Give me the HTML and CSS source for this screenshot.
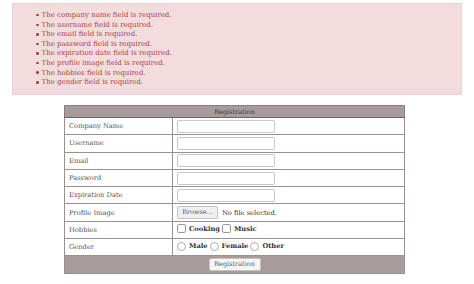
FILE: index.html
```html
<!DOCTYPE html>
<html>
<head>
<meta charset="utf-8">
<link rel="stylesheet" href="styles.css">
</head>
<body>
<div class="alert">
  <ul>
    <li>The company name field is required.</li>
    <li>The username field is required.</li>
    <li>The email field is required.</li>
    <li>The password field is required.</li>
    <li>The expiration date field is required.</li>
    <li>The profile image field is required.</li>
    <li>The hobbies field is required.</li>
    <li>The gender field is required.</li>
  </ul>
</div>
<table class="form">
  <tr class="head"><th colspan="2">Registration</th></tr>
  <tr><td class="lbl">Company Name</td><td><input class="txt" type="text"></td></tr>
  <tr><td class="lbl">Username</td><td><input class="txt" type="text"></td></tr>
  <tr><td class="lbl">Email</td><td><input class="txt" type="text"></td></tr>
  <tr><td class="lbl">Password</td><td><input class="txt" type="text"></td></tr>
  <tr><td class="lbl">Expiration Date</td><td><input class="txt" type="text"></td></tr>
  <tr><td class="lbl">Profile Image</td><td><span class="browse">Browse...</span><span class="nofile">No file selected.</span></td></tr>
  <tr><td class="lbl">Hobbies</td><td><span class="opt"><span class="box"></span><b>Cooking</b></span><span class="opt"><span class="box"></span><b>Music</b></span></td></tr>
  <tr><td class="lbl">Gender</td><td><span class="opt"><span class="radio"></span><b>Male</b></span><span class="opt"><span class="radio"></span><b>Female</b></span><span class="opt"><span class="radio"></span><b>Other</b></span></td></tr>
  <tr class="foot"><td colspan="2"><span class="submit">Registration</span></td></tr>
</table>
</body>
</html>
```
FILE: styles.css
```css
html, body {
  margin: 0;
  padding: 0;
  background: #ffffff;
}
body {
  font-family: "DejaVu Serif", serif;
  font-size: 6.7px;
  color: #444;
}
.alert {
  margin: 3px 12px 0 12px;
  width: 450px;
  height: 92px;
  box-sizing: border-box;
  background: #f2dcde;
  border: 1px solid #ecd0d3;
  padding-top: 7px;
  color: #a94442;
}
.alert ul {
  margin: 0;
  padding-left: 23px;
  list-style: none;
}
.alert li {
  font-size: 7px;
  line-height: 9.6px;
}
.alert li::before {
  content: "";
  display: inline-block;
  width: 2.5px;
  height: 2.5px;
  border-radius: 50%;
  background: #a94442;
  margin-right: 3px;
  vertical-align: middle;
}
table.form {
  margin: 10px 0 0 64px;
  width: 341px;
  border-collapse: collapse;
  border: 1px solid #8a8080;
}
.head th {
  background: #a89b9b;
  font-weight: normal;
  height: 11px;
  padding: 0;
  font-size: 6.5px;
  color: #3c3434;
  border-bottom: 1px solid #6e6464;
}
td {
  border: 1px solid #9a9090;
  height: 16.3px;
  padding: 0 4px;
  vertical-align: middle;
}
td.lbl {
  width: 99px;
  color: #555;
}
.txt {
  display: block;
  width: 98px;
  height: 13px;
  box-sizing: border-box;
  border: 1px solid #c8c8c8;
  border-radius: 2px;
  background: #fff;
  margin: 0;
  padding: 0;
}
.browse {
  display: inline-block;
  width: 41px;
  height: 13px;
  box-sizing: border-box;
  border: 1px solid #c4c4c4;
  border-radius: 2px;
  background: #f0f0f0;
  font-size: 6.5px;
  line-height: 11px;
  text-align: center;
  color: #555;
  vertical-align: middle;
}
.nofile {
  margin-left: 4px;
  vertical-align: middle;
  color: #333;
}
.opt {
  display: inline-flex;
  align-items: center;
  margin-right: 2px;
}
.opt b {
  color: #333;
}
.box {
  display: inline-block;
  width: 7px;
  height: 7px;
  border: 1px solid #999;
  border-radius: 2px;
  margin-right: 3px;
  background: #fff;
}
.radio {
  display: inline-block;
  width: 7px;
  height: 7px;
  border: 1px solid #aaa;
  border-radius: 50%;
  margin-right: 3px;
  background: #fff;
}
.foot td {
  background: #a89b9b;
  text-align: center;
  height: 16.5px;
  border-top: 1px solid #9a9090;
}
.submit {
  display: inline-block;
  width: 52px;
  height: 13px;
  box-sizing: border-box;
  border: 1px solid #c4c4c4;
  border-radius: 2px;
  background: #f5f5f5;
  font-size: 6.5px;
  line-height: 11px;
  color: #555;
  vertical-align: middle;
}
```
